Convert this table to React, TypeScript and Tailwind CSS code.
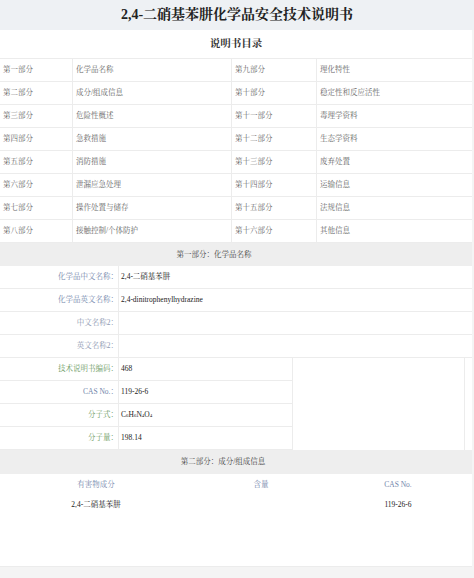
const font = { fontFamily: '"Liberation Serif", "Noto Serif CJK SC", "Noto Sans CJK SC", serif' };

const toc: [string, string, string, string][] = [
  ["第一部分", "化学品名称", "第九部分", "理化特性"],
  ["第二部分", "成分/组成信息", "第十部分", "稳定性和反应活性"],
  ["第三部分", "危险性概述", "第十一部分", "毒理学资料"],
  ["第四部分", "急救措施", "第十二部分", "生态学资料"],
  ["第五部分", "消防措施", "第十三部分", "废弃处置"],
  ["第六部分", "泄漏应急处理", "第十四部分", "运输信息"],
  ["第七部分", "操作处置与储存", "第十五部分", "法规信息"],
  ["第八部分", "接触控制/个体防护", "第十六部分", "其他信息"],
];

const blue = "text-[#7386ab]";
const green = "text-[#6b9a62]";

const InfoRow = ({ label, value, color }: { label: string; value: React.ReactNode; color: string }) => (
  <div className="flex h-[23px] border-b border-[#ececec] items-center">
    <div className={`w-[119px] h-full flex items-center justify-end border-r border-[#ececec] ${color}`}>{label}</div>
    <div className="pl-[2px] text-[#222]">{value}</div>
  </div>
);

export default function App() {
  return (
    <div className="w-[474px] h-[578px] bg-[#f4f4f4] overflow-hidden text-[7.5px] leading-none" style={font}>
      <div className="h-[30px] bg-[#eef1f4] flex items-center justify-center text-[14px] font-bold text-[#222]">
        2,4-二硝基苯肼化学品安全技术说明书
      </div>
      <div className="bg-white mr-[2px]">
        <div className="h-[29px] flex items-center justify-center text-[10.5px] font-bold text-[#333] border-b border-[#ececec]">
          说明书目录
        </div>
        <div className="grid grid-cols-[73px_159px_85px_1fr] text-[#666]">
          {toc.map((r) => (
            <div key={r[0]} className="contents">
              <div className="h-[23px] flex items-center pl-[3px] border-b border-r border-[#ececec]">{r[0]}</div>
              <div className="h-[23px] flex items-center pl-[3px] border-b border-r border-[#ececec]">{r[1]}</div>
              <div className="h-[23px] flex items-center pl-[3px] border-b border-r border-[#ececec]">{r[2]}</div>
              <div className="h-[23px] flex items-center pl-[3px] border-b border-[#ececec]">{r[3]}</div>
            </div>
          ))}
        </div>
        <div className="h-[23px] bg-[#eeeeee] flex items-center justify-center pr-[44px] text-[#444]">
          第一部分：化学品名称
        </div>
        <InfoRow label="化学品中文名称：" value="2,4-二硝基苯肼" color={blue} />
        <InfoRow label="化学品英文名称：" value="2,4-dinitrophenylhydrazine" color={blue} />
        <InfoRow label="中文名称2：" value="" color="text-[#8c97b0]" />
        <InfoRow label="英文名称2：" value="" color="text-[#8c97b0]" />
        <div className="flex">
          <div className="w-[293px] border-r border-[#ececec]">
            <InfoRow label="技术说明书编码：" value="468" color={green} />
            <InfoRow label="CAS No.：" value="119-26-6" color={blue} />
            <InfoRow
              label="分子式："
              value={
                <span>
                  C<span className="text-[5px]">6</span>H<span className="text-[5px]">6</span>N<span className="text-[5px]">4</span>O<span className="text-[5px]">4</span>
                </span>
              }
              color={green}
            />
            <InfoRow label="分子量：" value="198.14" color={green} />
          </div>
          <div className="w-[172px] border-r border-[#ececec]" />
        </div>
        <div className="h-[24px] bg-[#eeeeee] flex items-center justify-center pr-[26px] text-[#444]">
          第二部分：成分/组成信息
        </div>
        <div className="grid grid-cols-[192px_138px_136px] h-[93px] content-start border-b border-[#ececec]">
          <div className={`h-[21px] flex items-center justify-center ${blue}`}>有害物成分</div>
          <div className={`h-[21px] flex items-center justify-center ${blue}`}>含量</div>
          <div className={`h-[21px] flex items-center justify-center ${blue}`}>CAS No.</div>
          <div className="h-[19px] flex items-center justify-center text-[#222]">2,4-二硝基苯肼</div>
          <div className="h-[19px]" />
          <div className="h-[19px] flex items-center justify-center text-[#222]">119-26-6</div>
        </div>
      </div>
    </div>
  );
}
